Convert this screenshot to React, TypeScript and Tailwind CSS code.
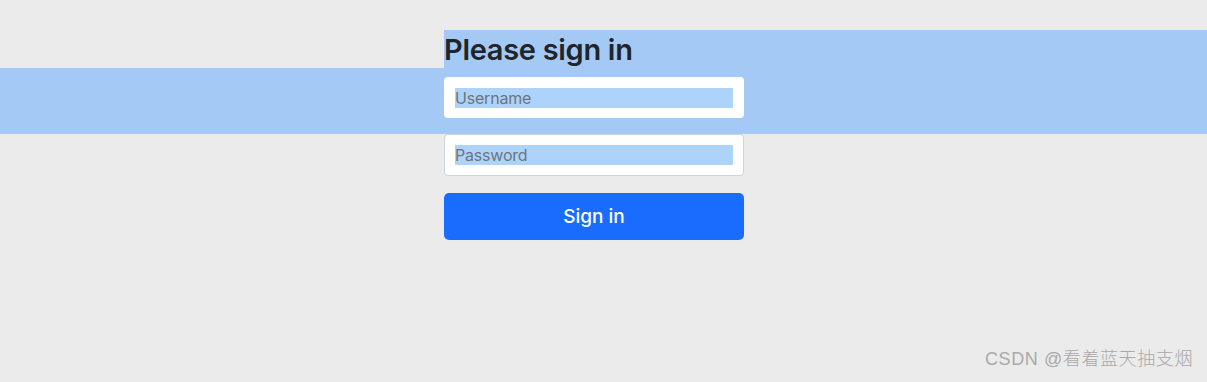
export default function App() {
  return (
    <div
      className="relative h-[382px] w-full overflow-hidden bg-[#ebebeb] text-[#212529]"
      style={{ fontFamily: 'Inter, "Liberation Sans", sans-serif' }}
    >
      <div className="pt-[30px]">
        {/* heading line, selected */}
        <div className="ml-[444px] h-[38px] bg-[#a4c9f5]">
          <h2 className="pt-[1px] text-[29px] font-semibold leading-[38px] tracking-[-0.3px]">Please sign in</h2>
        </div>

        {/* username row, selected band */}
        <div className="h-[66px] bg-[#a4c9f5] pt-[9px]">
          <div className="ml-[444px] flex h-[41px] w-[300px] items-center rounded-[4px] bg-white px-[11px]">
            <div className="h-[20px] w-full bg-[#aed3fb] text-[16px] leading-[20px] tracking-[-0.2px] text-[#6c757d]">Username</div>
          </div>
        </div>

        {/* password */}
        <div className="ml-[444px] flex h-[42px] w-[300px] items-center rounded-[4px] border border-[#ced4da] bg-white px-[10px]">
          <div className="h-[20px] w-full bg-[#aed3fb] text-[16px] leading-[20px] tracking-[-0.2px] text-[#6c757d]">Password</div>
        </div>

        <button className="ml-[444px] mt-[17px] flex h-[47px] w-[300px] items-center justify-center rounded-[5px] bg-[#196cfd] pt-[1px] text-[19px] font-medium text-white">
          Sign in
        </button>
      </div>

      {/* watermark */}
      <div
        className="absolute right-[14px] bottom-[9px] text-[18px] font-light tracking-[0.6px] text-[#a9a9a9]"
        style={{ fontFamily: '"Liberation Sans", "Noto Sans CJK SC", sans-serif' }}
      >
        CSDN @看着蓝天抽支烟
      </div>
    </div>
  )
}
